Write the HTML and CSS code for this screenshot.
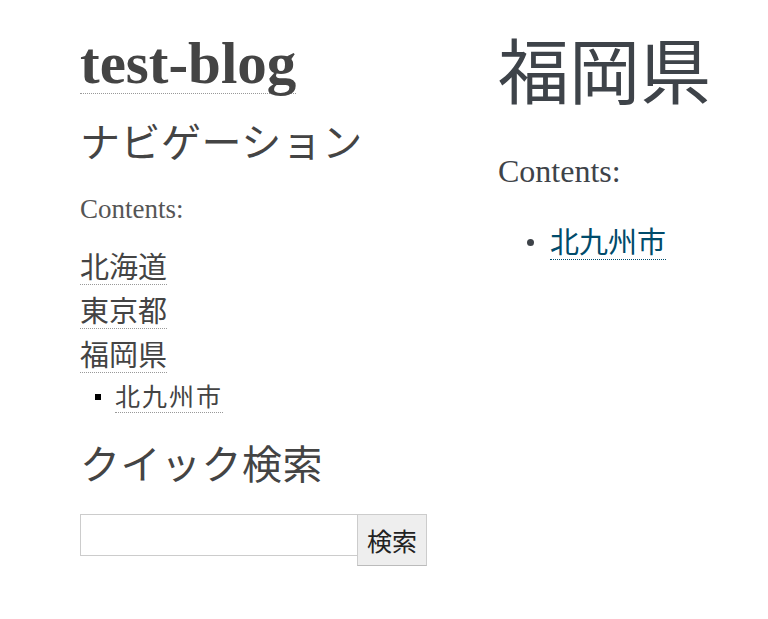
FILE: index.html
```html
<!DOCTYPE html>
<html lang="ja">
<head>
<meta charset="utf-8">
<title>福岡県 — test-blog</title>
<link rel="stylesheet" href="styles.css">
</head>
<body>
<div class="document">
  <aside class="sidebar">
    <h1 class="logo"><a href="#">test-blog</a></h1>
    <h3 class="side-title">ナビゲーション</h3>
    <p class="caption">Contents:</p>
    <ul class="toc">
      <li><a href="#">北海道</a></li>
      <li><a href="#">東京都</a></li>
      <li><a href="#">福岡県</a></li>
    </ul>
    <ul class="subtoc">
      <li><span class="square"></span><a href="#">北九州市</a></li>
    </ul>
    <h3 class="side-title search-title">クイック検索</h3>
    <form class="search">
      <input type="text" class="search-input" aria-label="検索">
      <button type="button" class="search-btn">検索</button>
    </form>
  </aside>
  <main class="body">
    <h1 class="page-title">福岡県</h1>
    <p class="body-caption">Contents:</p>
    <ul class="body-toc">
      <li><span class="disc"></span><a href="#">北九州市</a></li>
    </ul>
  </main>
</div>
</body>
</html>
```
FILE: styles.css
```css
html, body {
  margin: 0;
  padding: 0;
  background: #fff;
}
body {
  font-family: "Liberation Serif", "Noto Sans CJK JP", serif;
  color: #3E4349;
}
.document {
  display: flex;
  align-items: flex-start;
  padding-left: 80px;
}
.sidebar {
  width: 418px;
  display: flex;
  flex-direction: column;
  align-items: flex-start;
  color: #444;
}
.sidebar a {
  color: #444;
  text-decoration: none;
  border-bottom: 1px dotted #999;
}
.logo {
  margin: 34px 0 0 0;
  display: flex;
  font-family: "Liberation Serif", serif;
  font-weight: bold;
  font-size: 59px;
  line-height: 59px;
}
.side-title {
  margin: 22px 0 0 0;
  font-family: "Noto Sans CJK JP", sans-serif;
  font-weight: normal;
  font-size: 40px;
  line-height: 48px;
  letter-spacing: 0.5px;
  color: #444;
}
.caption {
  margin: 27px 0 0 0;
  font-family: "Liberation Serif", serif;
  font-size: 27px;
  line-height: 36px;
  color: #555;
}
.toc, .subtoc, .body-toc {
  list-style: none;
  margin: 0;
  padding: 0;
  display: flex;
  flex-direction: column;
  align-items: flex-start;
}
.toc {
  margin-top: 20px;
  gap: 6px;
}
.toc li, .subtoc li, .body-toc li {
  display: flex;
  align-items: center;
}
.toc a {
  font-family: "Noto Sans CJK JP", sans-serif;
  font-size: 29px;
  line-height: 37px;
}
.subtoc {
  margin-top: 5px;
  padding-left: 15px;
}
.square {
  width: 6px;
  height: 6px;
  background: #000;
  margin-right: 14px;
  margin-top: 2px;
}
.subtoc a {
  font-family: "Noto Sans CJK JP", sans-serif;
  font-size: 25px;
  line-height: 34px;
  letter-spacing: 2px;
}
.search-title {
  margin-top: 25px;
}
.search {
  margin: 28px 0 0 0;
  display: flex;
  align-items: flex-start;
}
.search-input {
  box-sizing: border-box;
  width: 278px;
  height: 42px;
  margin: 0;
  border: 1px solid #ccc;
  padding: 0 4px;
  background: #fff;
}
.search-btn {
  box-sizing: border-box;
  width: 70px;
  height: 52px;
  margin: 0 0 0 -1px;
  border: 1px solid #ccc;
  border-bottom-color: #bbb;
  background: #eee;
  color: #222;
  font-family: "Noto Sans CJK JP", sans-serif;
  font-size: 25px;
  padding: 0;
}
.body {
  flex: 1;
  display: flex;
  flex-direction: column;
  align-items: flex-start;
}
.page-title {
  margin: 27px 0 0 0;
  font-family: "Noto Sans CJK JP", sans-serif;
  font-weight: normal;
  font-size: 71px;
  line-height: 80px;
  color: #3E4349;
}
.body-caption {
  margin: 44px 0 0 0;
  font-family: "Liberation Serif", serif;
  font-size: 32px;
  line-height: 40px;
}
.body-toc {
  margin-top: 31px;
  padding-left: 29px;
}
.disc {
  width: 7px;
  height: 7px;
  border-radius: 50%;
  background: #3E4349;
  margin-right: 16px;
  margin-top: 2px;
}
.body-toc a {
  color: #004B6B;
  text-decoration: none;
  border-bottom: 1px dotted #004B6B;
  font-family: "Noto Sans CJK JP", sans-serif;
  font-size: 29px;
  line-height: 37px;
}
```
